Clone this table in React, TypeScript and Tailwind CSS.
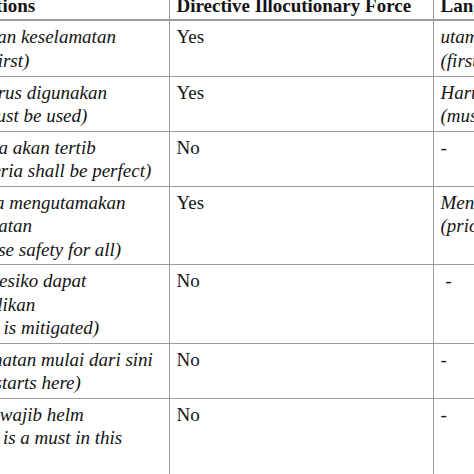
import React from 'react';

type Row = {
  id: string;
  locution: string;
  gloss: string;
  directive: string;
  style: string;
  styleGloss?: string;
};

const ROWS: Row[] = [
  { id: 'r1', locution: 'Utamakan keselamatan', gloss: '(safety first)', directive: 'Yes', style: 'utamakan', styleGloss: '(first)' },
  { id: 'r2', locution: 'APD harus digunakan', gloss: '(PPE must be used)', directive: 'Yes', style: 'Harus', styleGloss: '(must)' },
  { id: 'r3', locution: 'Keluarga akan tertib', gloss: '(its criteria shall be perfect)', directive: 'No', style: '-' },
  { id: 'r4', locution: 'Bersama mengutamakan keselamatan', gloss: '(prioritise safety for all)', directive: 'Yes', style: 'Mengutamakan', styleGloss: '(prioritise)' },
  { id: 'r5', locution: 'Semua resiko dapat dikendalikan', gloss: '(All risk is mitigated)', directive: 'No', style: '\u00a0-' },
  { id: 'r6', locution: 'Keselamatan mulai dari sini', gloss: '(Safety starts here)', directive: 'No', style: '-' },
  { id: 'r7', locution: 'Daerah wajib helm', gloss: '(Helmet is a must in this area)', directive: 'No', style: '-' },
];

const cell = 'border-r border-b border-[#9c9c9c] align-top px-[7px] pt-[4px]';

export default function App() {
  return (
    <div className="w-[474px] h-[474px] overflow-hidden bg-white text-[#141414] font-['Liberation_Serif','Times_New_Roman',serif] text-[19px] leading-[23.4px]">
      <table className="table-fixed border-collapse w-[803px] -ml-[70px] -mt-[10px] text-left">
        <colgroup>
          <col className="w-[239px]" />
          <col className="w-[264px]" />
          <col className="w-[300px]" />
        </colgroup>
        <thead>
          <tr>
            <th className={`${cell} pb-[2px] border-b-2 font-bold`}>Instructions</th>
            <th className={`${cell} pb-[2px] border-b-2 font-bold`}>Directive Illocutionary Force</th>
            <th className={`${cell} pb-[2px] border-b-2 font-bold`}>Language Style</th>
          </tr>
        </thead>
        <tbody>
          {ROWS.map((row) => (
            <tr key={row.id}>
              <td className={`${cell} pb-[3.3px] italic`}>
                <span className="block">{row.locution}</span>
                <span className="block">{row.gloss}</span>
              </td>
              <td className={`${cell} pb-[3.3px]`}>{row.directive}</td>
              <td className={`${cell} pb-[3.3px]`}>
                {row.styleGloss ? (
                  <span className="italic">
                    <span className="block">{row.style}</span>
                    <span className="block">{row.styleGloss}</span>
                  </span>
                ) : (
                  <span>{row.style}</span>
                )}
              </td>
            </tr>
          ))}
        </tbody>
      </table>
    </div>
  );
}
